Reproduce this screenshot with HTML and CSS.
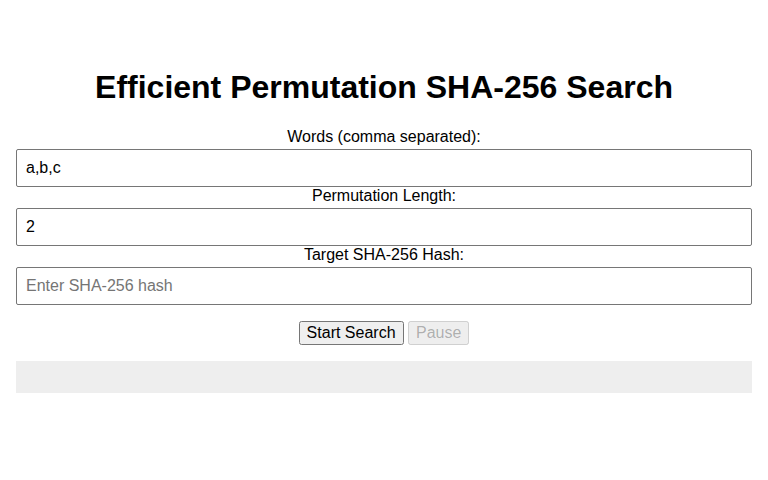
FILE: index.html
```html
<!DOCTYPE html>
<html lang="en">
<head>
  <meta charset="UTF-8" />
  <meta name="viewport" content="width=device-width, initial-scale=1.0"/>
  <title>Efficient Permutation SHA-256 Search</title>
  <link rel="stylesheet" href="styles.css">
</head>
<body>

  <h1>Efficient Permutation SHA-256 Search</h1>

  <label for="words">Words (comma separated):</label>
  <input type="text" id="words" value="a,b,c" />

  <label for="length">Permutation Length:</label>
  <input type="number" id="length" value="2" />

  <label for="target">Target SHA-256 Hash:</label>
  <input type="text" id="target" placeholder="Enter SHA-256 hash" />

  <div class="controls">
    <button id="startBtn">Start Search</button>
    <button id="pauseBtn" disabled>Pause</button>
  </div>

  <div class="output" id="output"></div>

</body>
</html>
```

FILE: styles.css
```css
body {
  margin: 0;
  padding: 48px 16px;
  font-family: "Liberation Sans", Arial, sans-serif;
  background-color: #ffffff;
  color: #000;
  text-align: center;
}

h1 {
  font-size: 32px;
  margin: 21px 0 22px;
}

label {
  display: block;
  font-size: 16px;
  margin-bottom: 3px;
}

input {
  display: block;
  box-sizing: border-box;
  width: 100%;
  height: 38px;
  padding: 8px 9px;
  font-family: "Liberation Sans", Arial, sans-serif;
  font-size: 16px;
  border: 1px solid #767676;
  border-radius: 2px;
  color: #000;
  -moz-appearance: textfield;
}

input::-webkit-outer-spin-button,
input::-webkit-inner-spin-button {
  -webkit-appearance: none;
  margin: 0;
}

input::placeholder {
  color: #757575;
}

.controls {
  margin: 16px 0;
}

.controls button {
  font-family: "Liberation Sans", Arial, sans-serif;
  font-size: 16px;
  margin: 0;
}

.output {
  background-color: #eeeeee;
  height: 32px;
}
```
